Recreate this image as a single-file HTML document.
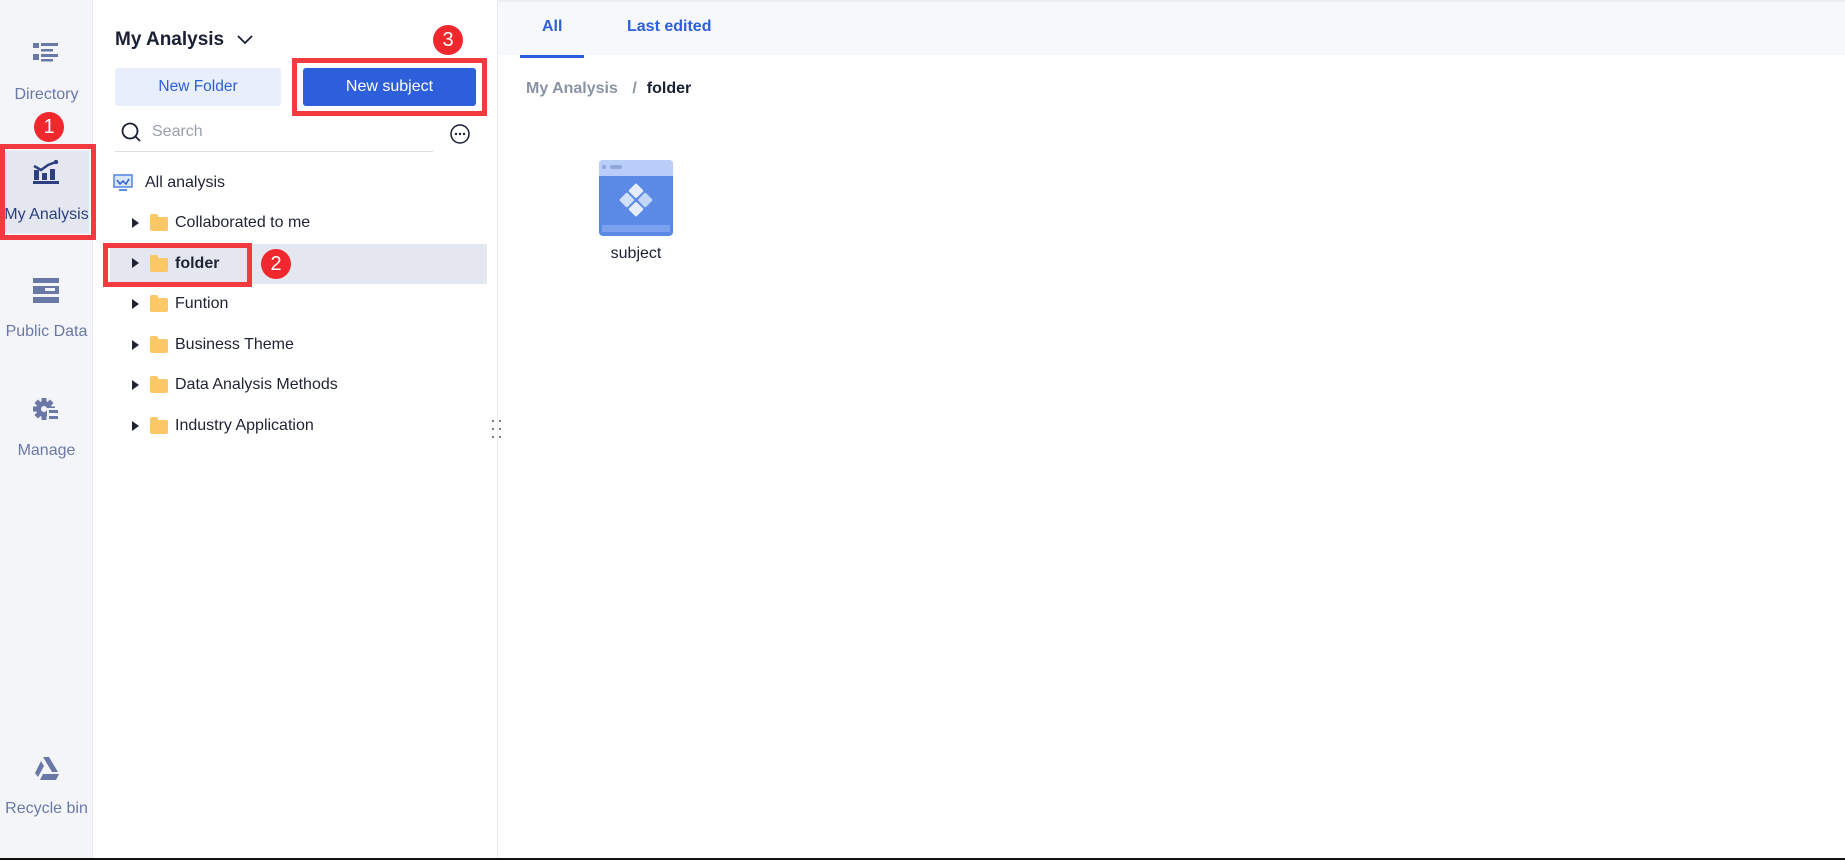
<!DOCTYPE html>
<html><head><meta charset="utf-8"><style>
*{margin:0;padding:0;box-sizing:border-box}
body{width:1845px;height:860px;background:#fff;font-family:"Liberation Sans",sans-serif;position:relative;overflow:hidden}
.a{position:absolute}
.side{left:0;top:0;width:93px;height:858px;background:#f3f5f9;border-right:1px solid #e8eaef}
.lbl{width:93px;text-align:center;font-size:16px;color:#6a78a8;white-space:nowrap}
.badge{width:30px;height:30px;border-radius:50%;background:#f0282d;color:#fff;font-size:20px;text-align:center;line-height:30px}
.rbox{border:5px solid #f33a3e}
.tree{font-size:16px;color:#1f2333}
.arrow{width:0;height:0;border-top:5px solid transparent;border-bottom:5px solid transparent;border-left:7px solid #1f2333}
.fold{width:18px;height:14px;background:#fcc867;border-radius:2px}
.fold:before{content:"";position:absolute;left:0;top:-3px;width:8px;height:4px;background:#fcc867;border-radius:2px 2px 0 0}
</style></head><body>
<div class="a side"></div>
<div class="a" style="left:0;top:858px;width:1845px;height:2px;background:#111"></div>
<!-- sidebar -->
<svg class="a" style="left:33px;top:42px" width="26" height="22"><g fill="#6a78a8"><rect x="0" y="1" width="6" height="5"/><rect x="8" y="1" width="17" height="3"/><rect x="8" y="7" width="12" height="2.5"/><rect x="0" y="12" width="6" height="6"/><rect x="8" y="12" width="17" height="3"/><rect x="8" y="17" width="12" height="2.5"/></g></svg>
<div class="a lbl" style="top:86px">Directory</div>
<div class="a badge" style="left:34px;top:112px">1</div>
<div class="a" style="left:3px;top:151px;width:86px;height:82px;background:#e4e7ef"></div>
<div class="a rbox" style="left:0;top:144px;width:96px;height:96px"></div>
<svg class="a" style="left:33px;top:160px" width="26" height="26"><g fill="#2c3f80"><rect x="0" y="21" width="26" height="3"/><rect x="1" y="10" width="5" height="10"/><rect x="9" y="13" width="5" height="7"/><rect x="17" y="9" width="5" height="11"/><circle cx="23" cy="2" r="2.2"/></g><polyline points="1,6 8,10 15,5 23,2" stroke="#2c3f80" stroke-width="2.5" fill="none"/></svg>
<div class="a lbl" style="top:206px;color:#2c3f80">My Analysis</div>
<svg class="a" style="left:33px;top:278px" width="26" height="26"><g fill="#6a78a8"><rect x="0" y="0" width="26" height="5"/><rect x="0" y="8" width="26" height="8"/><rect x="0" y="19" width="26" height="6"/></g><rect x="12" y="10" width="10" height="3" fill="#f3f5f9"/></svg>
<div class="a lbl" style="top:323px">Public Data</div>
<svg class="a" style="left:33px;top:397px" width="26" height="26"><g fill="#6a78a8"><circle cx="11" cy="12" r="8"/><g transform="translate(11 12)"><rect x="-2.5" y="-11" width="5" height="22"/><rect x="-2.5" y="-11" width="5" height="22" transform="rotate(45)"/><rect x="-2.5" y="-11" width="5" height="22" transform="rotate(90)"/><rect x="-2.5" y="-11" width="5" height="22" transform="rotate(135)"/></g></g><circle cx="11" cy="12" r="3" fill="#f3f5f9"/><rect x="14" y="11" width="12" height="15" fill="#f3f5f9"/><rect x="16" y="13" width="9" height="3" fill="#6a78a8"/><rect x="16" y="19" width="9" height="3" fill="#6a78a8"/></svg>
<div class="a lbl" style="top:442px">Manage</div>
<svg class="a" style="left:33px;top:756px" width="26" height="24"><g fill="#6a78a8"><polygon points="10,1 16,1 25,16 19,16"/><polygon points="8,5 11,10 5,21 2,17"/><polygon points="7,24 10,18 26,18 23,24"/></g></svg>
<div class="a lbl" style="top:800px">Recycle bin</div>
<!-- tree panel -->
<div class="a" style="left:497px;top:0;width:1px;height:858px;background:#e8eaef"></div>
<div class="a" style="left:115px;top:29px;font-size:19px;font-weight:bold;color:#1a1f33">My Analysis</div>
<svg class="a" style="left:237px;top:35px" width="16" height="10"><polyline points="1,1 8,8 15,1" stroke="#1a1f33" stroke-width="1.8" fill="none"/></svg>
<div class="a badge" style="left:433px;top:25px">3</div>
<div class="a" style="left:115px;top:68px;width:166px;height:38px;background:#e8eefb;border-radius:3px;color:#2c5fd9;font-size:15.5px;text-align:center;line-height:38px">New Folder</div>
<div class="a" style="left:303px;top:68px;width:173px;height:38px;background:#2c5fd9;border-radius:3px;color:#fff;font-size:16px;text-align:center;line-height:38px">New subject</div>
<div class="a rbox" style="left:292px;top:58px;width:195px;height:58px"></div>
<svg class="a" style="left:121px;top:122px" width="22" height="22"><circle cx="9" cy="9" r="7.5" stroke="#1a1f33" stroke-width="1.8" fill="none"/><line x1="14.5" y1="14.5" x2="19" y2="19" stroke="#1a1f33" stroke-width="1.8"/></svg>
<div class="a" style="left:152px;top:123px;font-size:16px;color:#9aa0ad">Search</div>
<div class="a" style="left:115px;top:151px;width:318px;height:1px;background:#dcdfe6"></div>
<svg class="a" style="left:449px;top:123px" width="22" height="22"><circle cx="11" cy="11" r="9" stroke="#1a1f33" stroke-width="1.5" fill="none"/><g fill="#1a1f33"><circle cx="7" cy="11" r="1.2"/><circle cx="11" cy="11" r="1.2"/><circle cx="15" cy="11" r="1.2"/></g></svg>
<svg class="a" style="left:113px;top:174px" width="21" height="19"><rect x="1" y="1" width="18" height="12" stroke="#5b8ae8" stroke-width="1.6" fill="#dbe6fb"/><polyline points="4,6 7,10 10,7 13,10 16,5" stroke="#2c5fd9" stroke-width="1.5" fill="none"/><rect x="6" y="15" width="8" height="2" fill="#5b8ae8"/></svg>
<div class="a tree" style="left:145px;top:174px">All analysis</div>
<div class="a" style="left:110px;top:244px;width:377px;height:40px;background:#e4e7ef;border-radius:2px"></div>
<div class="a rbox" style="left:103px;top:243px;width:149px;height:44px"></div>
<div class="a badge" style="left:261px;top:249px">2</div>
<div class="a arrow" style="left:132px;top:218px"></div><div class="a fold" style="left:150px;top:217px"></div>
<div class="a tree" style="left:175px;top:214px">Collaborated to me</div>
<div class="a arrow" style="left:132px;top:258px"></div><div class="a fold" style="left:150px;top:258px"></div>
<div class="a tree" style="left:175px;top:255px;font-weight:bold">folder</div>
<div class="a arrow" style="left:132px;top:299px"></div><div class="a fold" style="left:150px;top:298px"></div>
<div class="a tree" style="left:175px;top:295px">Funtion</div>
<div class="a arrow" style="left:132px;top:340px"></div><div class="a fold" style="left:150px;top:339px"></div>
<div class="a tree" style="left:175px;top:336px">Business Theme</div>
<div class="a arrow" style="left:132px;top:380px"></div><div class="a fold" style="left:150px;top:379px"></div>
<div class="a tree" style="left:175px;top:376px">Data Analysis Methods</div>
<div class="a arrow" style="left:132px;top:421px"></div><div class="a fold" style="left:150px;top:420px"></div>
<div class="a tree" style="left:175px;top:417px">Industry Application</div>
<svg class="a" style="left:491px;top:419px" width="12" height="22"><g fill="#555"><circle cx="2" cy="2" r="1"/><circle cx="9" cy="2" r="1"/><circle cx="2" cy="10" r="1"/><circle cx="9" cy="10" r="1"/><circle cx="2" cy="18" r="1"/><circle cx="9" cy="18" r="1"/></g></svg>
<!-- right -->
<div class="a" style="left:498px;top:0;width:1347px;height:55px;background:#f7f8fb;border-top:2px solid #eceef2"></div>
<div class="a" style="left:542px;top:18px;font-size:16px;font-weight:bold;color:#2c5fd9">All</div>
<div class="a" style="left:520px;top:55px;width:64px;height:3px;background:#2c5fd9"></div>
<div class="a" style="left:627px;top:18px;font-size:16px;font-weight:bold;color:#2c5fd9">Last edited</div>
<div class="a" style="left:526px;top:80px;font-size:16px;font-weight:bold;color:#8a93a6">My Analysis <span style="margin:0 10px">/</span><span style="color:#1a1f33">folder</span></div>
<svg class="a" style="left:599px;top:160px" width="74" height="77"><rect x="0" y="0" width="74" height="76" rx="4" fill="#5b8ae6"/><path d="M0 16V4a4 4 0 0 1 4-4h66a4 4 0 0 1 4 4v12z" fill="#b8cdf7"/><circle cx="5" cy="7" r="2" fill="#8fa8d9"/><rect x="11" y="5" width="12" height="4" rx="2" fill="#8fa8d9"/><rect x="3" y="65" width="68" height="7" fill="#7aa0ee"/><g fill="#e6edfd" transform="rotate(45 37 40)"><rect x="25" y="28" width="11" height="11" rx="1.5"/><rect x="38" y="28" width="11" height="11" rx="1.5" opacity=".75"/><rect x="25" y="41" width="11" height="11" rx="1.5" opacity=".85"/><rect x="38" y="41" width="11" height="11" rx="1.5"/></g></svg>
<div class="a" style="left:596px;top:245px;width:80px;text-align:center;font-size:16px;color:#1a1f33">subject</div>
</body></html>
